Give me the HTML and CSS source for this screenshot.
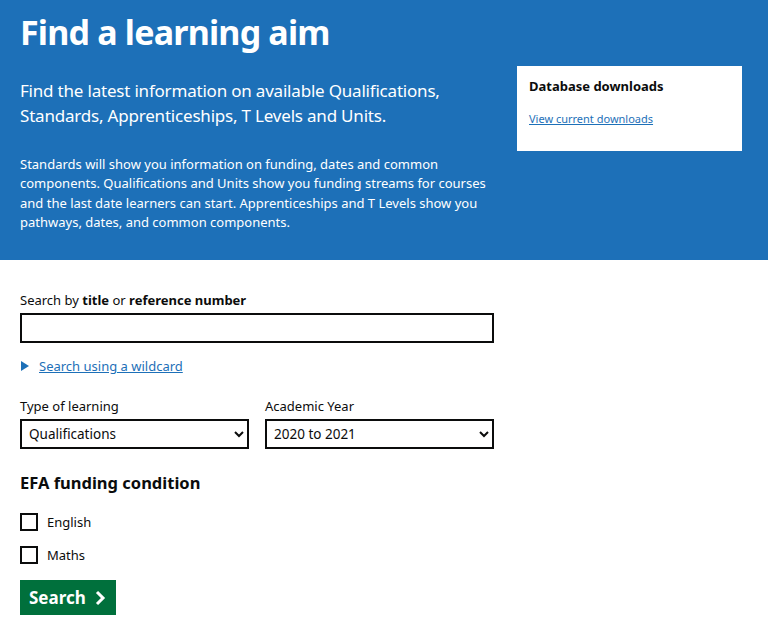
FILE: index.html
```html
<!DOCTYPE html>
<html lang="en">
<head>
  <meta charset="UTF-8">
  <meta name="viewport" content="width=device-width, initial-scale=1.0">
  <title>Find a learning aim</title>
  <link rel="stylesheet" href="styles.css">
</head>
<body>
  <div class="hero">
    <h1>Find a learning aim</h1>
    <div class="hero-row">
      <div class="hero-text">
        <p class="lead">Find the latest information on available Qualifications, Standards, Apprenticeships, T Levels and Units.</p>
        <p class="body">Standards will show you information on funding, dates and common components. Qualifications and Units show you funding streams for courses and the last date learners can start. Apprenticeships and T Levels show you pathways, dates, and common components.</p>
      </div>
      <div class="downloads">
        <h2>Database downloads</h2>
        <a href="#">View current downloads</a>
      </div>
    </div>
  </div>

  <form class="search-form">
    <label for="searchTerm">Search by <b>title</b> or <b>reference number</b></label>
    <input type="text" id="searchTerm" class="text-input">

    <details class="wildcard">
      <summary><span>Search using a wildcard</span></summary>
    </details>

    <div class="select-row">
      <div class="field">
        <label for="learningType">Type of learning</label>
        <select id="learningType">
          <option>Qualifications</option>
        </select>
      </div>
      <div class="field">
        <label for="academicYear">Academic Year</label>
        <select id="academicYear">
          <option>2020 to 2021</option>
        </select>
      </div>
    </div>

    <h3>EFA funding condition</h3>
    <label class="check"><input type="checkbox"> English</label>
    <label class="check"><input type="checkbox"> Maths</label>

    <button type="submit">Search
      <svg width="12" height="16" viewBox="0 0 12 16"><path d="M3 2 L9 8 L3 14" fill="none" stroke="#fff" stroke-width="3"/></svg>
    </button>
  </form>
</body>
</html>
```

FILE: styles.css
```css
body {
  font-family: "Noto Sans", Arial, sans-serif;
  margin: 0;
  padding: 0;
  color: #0b0c0c;
  background-color: #fff;
}
.hero {
  background-color: #1d70b8;
  color: #fff;
  padding: 12px 20px 28px;
  height: 220px;
}
h1 {
  font-size: 34px;
  letter-spacing: -0.8px;
  font-weight: bold;
  margin: 0 0 26px;
  line-height: 40px;
}
.hero-row {
  display: flex;
  justify-content: space-between;
  align-items: flex-start;
}
.hero-text {
  width: 470px;
}
.lead {
  font-size: 17px;
  letter-spacing: -0.2px;
  line-height: 25px;
  margin: 0 0 27px;
}
.body {
  font-size: 13px;
  line-height: 19.4px;
  margin: 0;
}
.downloads {
  background-color: #fff;
  color: #0b0c0c;
  width: 225px;
  height: 85px;
  box-sizing: border-box;
  padding: 11px 12px;
  margin: -12px 6px 0 0;
}
.downloads h2 {
  font-size: 13px;
  font-weight: bold;
  margin: 0 0 11px;
}
.downloads a {
  font-size: 11px;
  color: #1d70b8;
}
.search-form {
  padding: 31px 20px 0;
  width: 474px;
}
.search-form label {
  display: block;
  font-size: 13px;
  margin-bottom: 4px;
}
.text-input {
  display: block;
  width: 100%;
  height: 30px;
  border: 2px solid #0b0c0c;
  box-sizing: border-box;
  margin: 0 0 14px;
}
.wildcard {
  font-size: 13px;
  margin-bottom: 22px;
}
.wildcard summary {
  color: #1d70b8;
  cursor: pointer;
  list-style: none;
  padding-left: 19px;
  position: relative;
}
.wildcard summary::before {
  content: "";
  position: absolute;
  left: 1px;
  top: 4px;
  border-left: 8px solid #1d70b8;
  border-top: 5px solid transparent;
  border-bottom: 5px solid transparent;
}
.wildcard summary span {
  text-decoration: underline;
}
.select-row {
  display: flex;
  gap: 16px;
}
.field {
  flex: 1;
}
select {
  width: 100%;
  height: 30px;
  border: 2px solid #0b0c0c;
  font-family: inherit;
  font-size: 13.5px;
  padding: 0 3px;
  background-color: #fff;
  color: #0b0c0c;
}
h3 {
  font-size: 16.5px;
  font-weight: bold;
  margin: 22px 0 19px;
}
.search-form .check {
  display: flex;
  align-items: center;
  gap: 9px;
  margin-bottom: 15px;
}
.check input {
  appearance: none;
  width: 18px;
  height: 18px;
  border: 2px solid #0b0c0c;
  margin: 0;
  box-sizing: border-box;
}
button {
  display: inline-flex;
  align-items: center;
  gap: 8px;
  background-color: #00703c;
  color: #fff;
  border: none;
  box-shadow: 0 2px 0 #002d18;
  font-family: inherit;
  font-size: 17px;
  font-weight: bold;
  padding: 6px 10px 6px 9px;
  margin-top: 1px;
  cursor: pointer;
}
```
